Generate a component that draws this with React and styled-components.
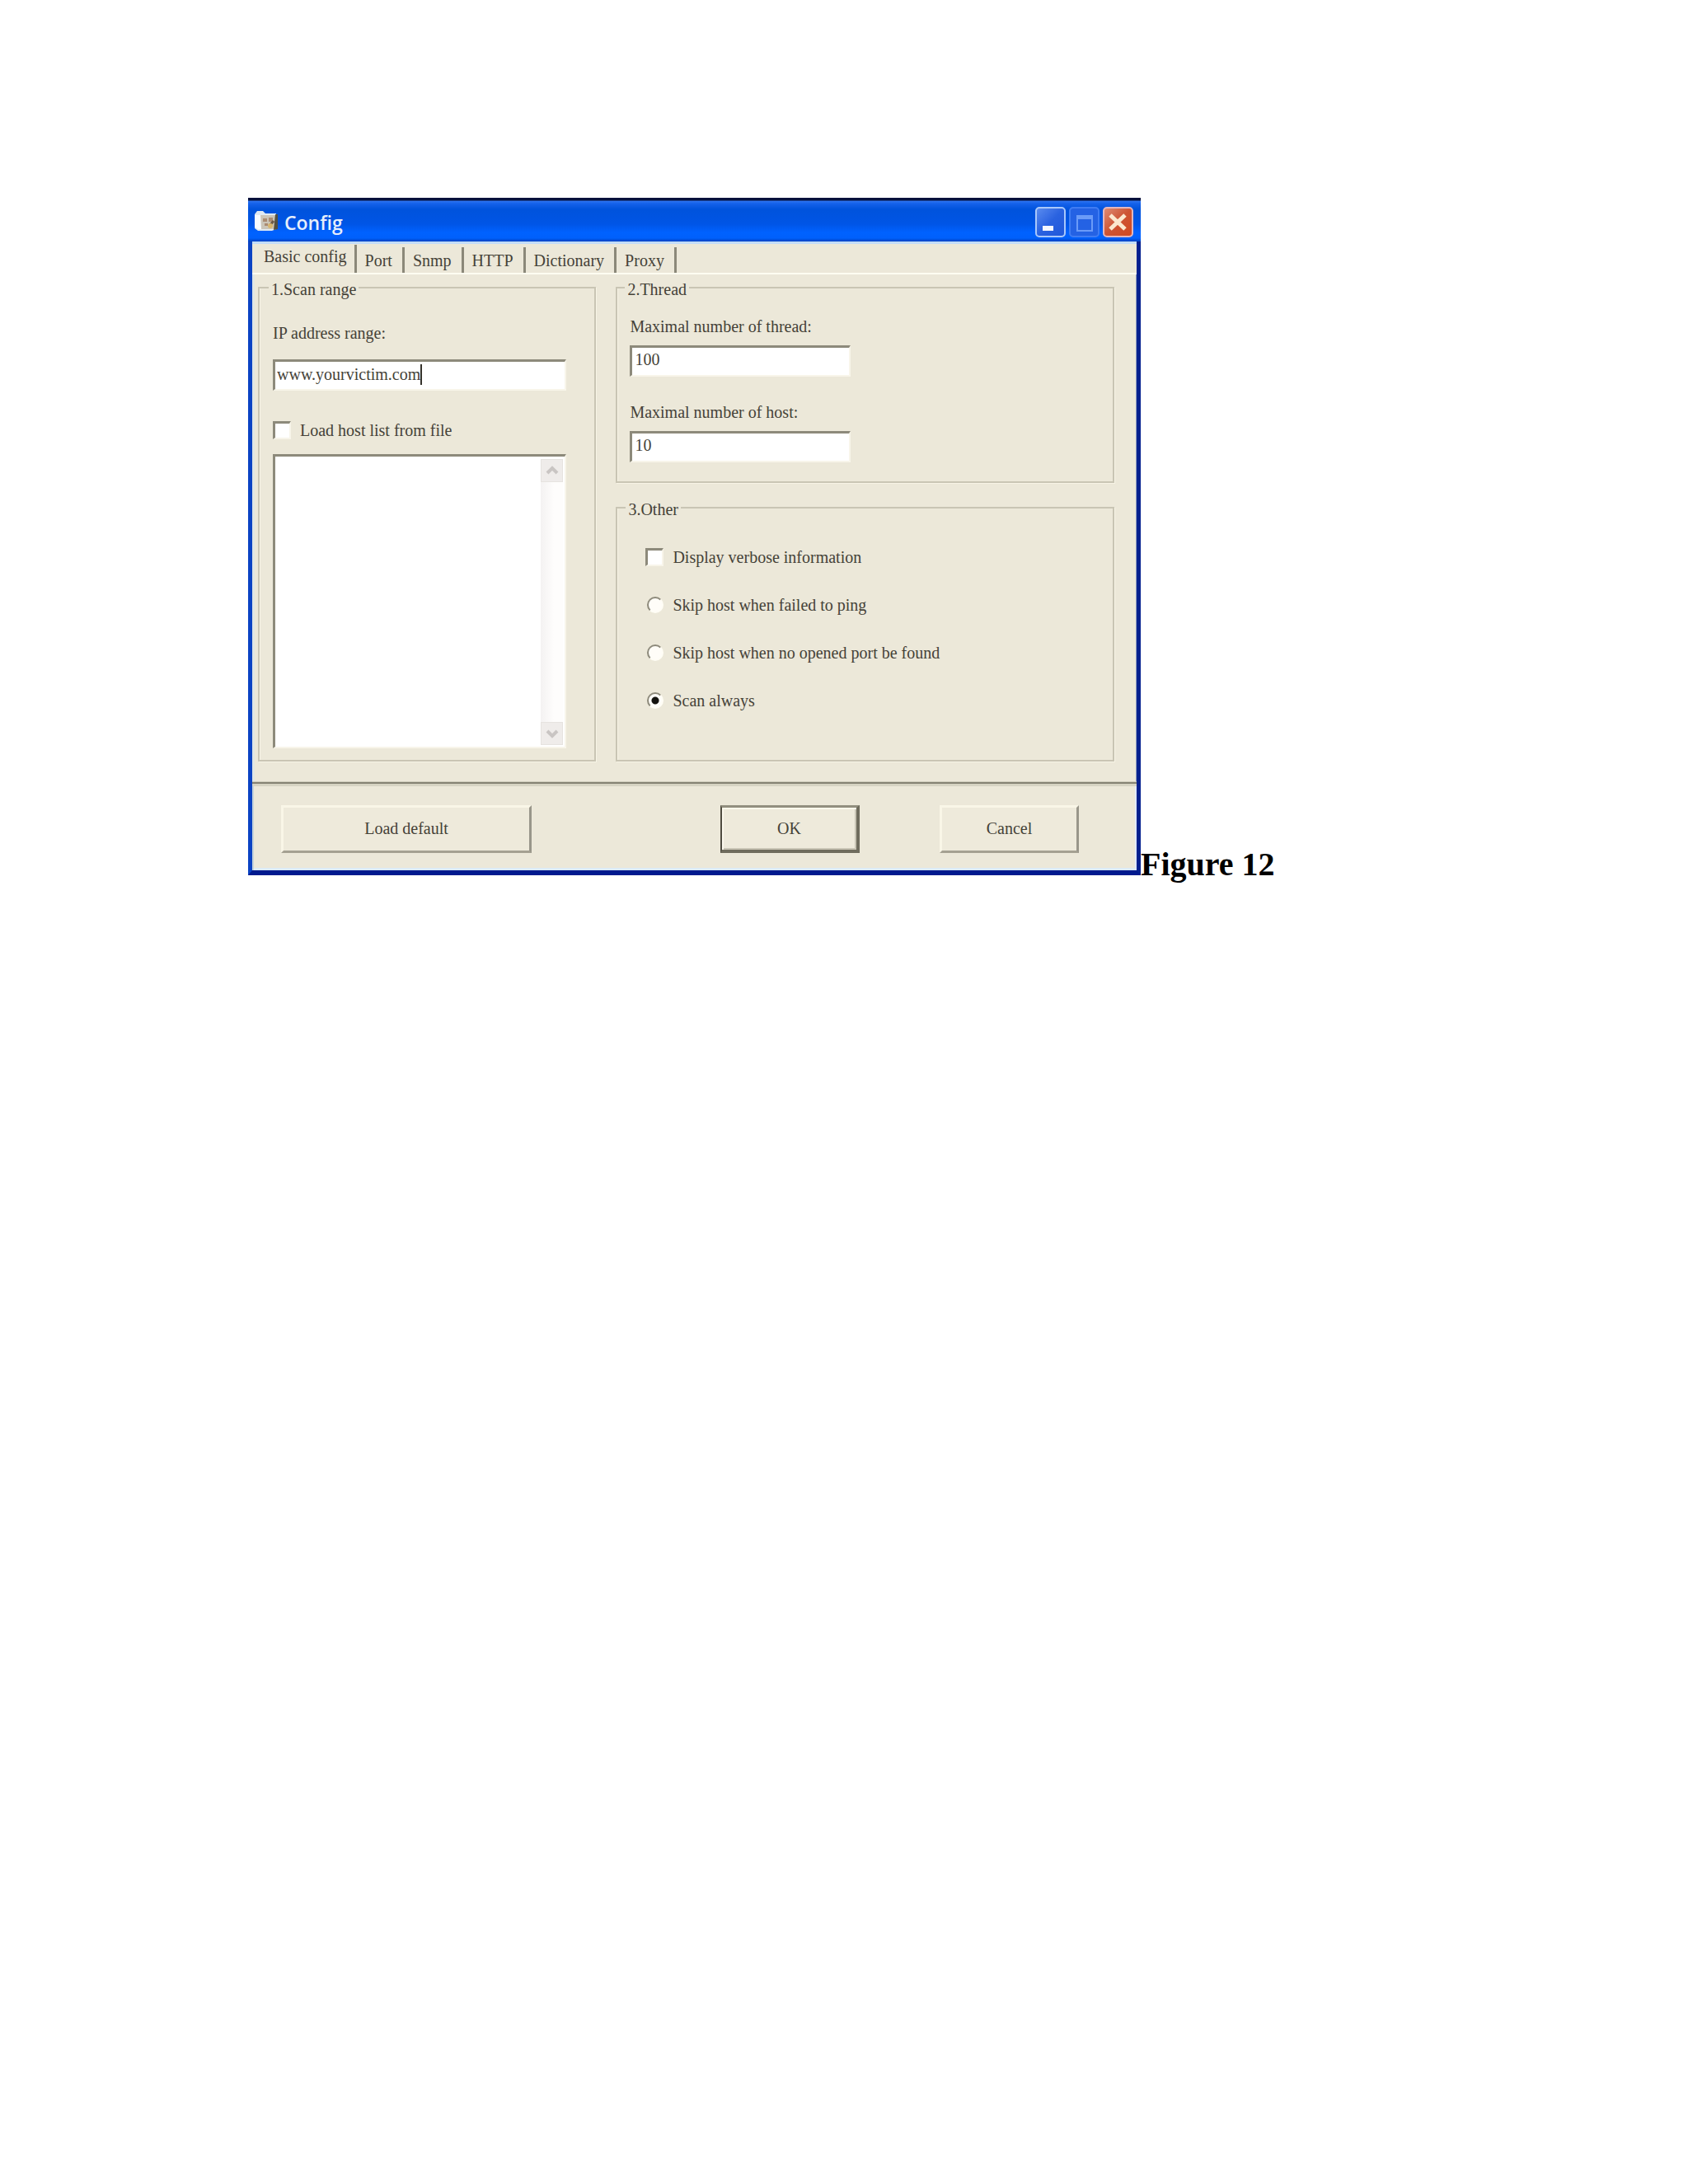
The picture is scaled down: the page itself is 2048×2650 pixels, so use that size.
import React, { useState } from "react";
import styled, { createGlobalStyle, css } from "styled-components";

const ink = "#454238";
const face = "#ece8d9";
const serif = '"Liberation Serif", "Times New Roman", serif';

const GlobalStyle = createGlobalStyle`
  *, *::before, *::after { box-sizing: border-box; }
  body {
    margin: 0;
    background: #fff;
    font-family: ${serif};
  }
  button, input, textarea { font: inherit; color: inherit; margin: 0; }
`;

const Page = styled.main`
  padding: 240px 40px 40px 301px;
`;

const Figure = styled.figure`
  display: flex;
  align-items: flex-end;
  margin: 0;
`;

const Caption = styled.figcaption`
  flex: none;
  font-size: 40px;
  font-weight: 700;
  line-height: 27px;
  color: #000;
`;

const Dialog = styled.section`
  flex: 0 1 1083px;
  border: solid;
  border-width: 0 5px 6px;
  border-color: #001a8e #04208f #001a8e #0b43c4;
  background: ${face};
  color: ${ink};
  font-size: 20px;
  line-height: 24px;
`;

const TitleBar = styled.header`
  display: flex;
  align-items: center;
  gap: 7px;
  height: 53px;
  margin: 0 -5px;
  padding: 5px 9px 0 7px;
  background: linear-gradient(
    #05103c 0, #05103c 3px, #2c74f2 4px, #1561ea 7px,
    #0053dc 14px, #0055e6 32px, #0062ff 42px, #0060fb 49px, #0042c0 53px
  );
`;

const Title = styled.h1`
  flex: 1;
  margin: 0;
  padding-top: 2px;
  font: 600 23px/28px "Open Sans", "Noto Sans", sans-serif;
  color: #e6effc;
`;

const WindowButtons = styled.div`
  display: flex;
  gap: 4px;
`;

const tones = {
  plain: css`
    border-color: #a9c8fb;
    background: linear-gradient(135deg, #5a8bef, #2a62e0 50%, #2058da);
  `,
  dim: css`
    border-color: #3f7cf3;
    background: #2462e4;
  `,
  close: css`
    border-color: #e3b6bd;
    background: linear-gradient(135deg, #dd8a72, #cd5433 50%, #d2491f);
  `,
};

const WindowButton = styled.button`
  display: grid;
  place-items: center;
  width: 37px;
  height: 37px;
  padding: 0;
  border: 2px solid;
  border-radius: 5px;
  ${({ $tone }) => tones[$tone]}
`;

const TabStrip = styled.div`
  display: flex;
  align-items: flex-end;
  height: 40px;
  padding-left: 4px;
  border-top: 3px solid #c3dcf8;
  border-bottom: 2px solid #fffdf2;
`;

const Tab = styled.button`
  height: ${({ $active }) => ($active ? 34 : 31)}px;
  padding: ${({ $active }) => ($active ? "0 9px 6px 10px" : "0 12px 0 10px")};
  border: 0;
  border-right: 3px solid #8b8879;
  background: none;
  line-height: 24px;
  white-space: nowrap;
`;

const TabPage = styled.div`
  display: grid;
  grid-template-columns: 410fr 604fr;
  gap: 24px;
  padding: 2px 26px 25px 4px;
  border-left: 3px solid #e0e6e4;
  border-right: 1px solid #8f9cc0;
`;

const Column = styled.div`
  display: flex;
  flex-direction: column;
  gap: 16px;
  min-width: 0;
`;

const Group = styled.fieldset`
  flex: ${({ $grow }) => ($grow ? "1 0 auto" : "none")};
  min-width: 0;
  margin: 0;
  padding: ${({ $pad }) => $pad};
  border: 2px solid #c9c5b4;
  box-shadow: inset 1px 0 #f7f4e6, 1px 1px #f7f4e6;
`;

const Legend = styled.legend`
  margin-left: ${({ $inset }) => $inset}px;
  padding: 4px 3px 0;
`;

const Label = styled.label`
  display: block;
`;

const sunken = css`
  border: solid;
  border-width: 3px 2px 2px 3px;
  border-color: #8d8a7b #f8f5ea #f8f5ea #8d8a7b;
  background: #fff;
`;

const TextBox = styled.input`
  display: block;
  width: 268px;
  max-width: 100%;
  height: 38px;
  margin: 11px 0 31px;
  padding: 0 3px 4px;
  border-radius: 0;
  outline: 0;
  ${sunken}
  &:last-child { margin-bottom: 0; }
`;

const AddressBox = styled.label`
  display: flex;
  align-items: center;
  height: 38px;
  margin: 20px 0 36px;
  padding: 0 2px 3px;
  cursor: text;
  ${sunken}
`;

const AddressInput = styled.input`
  field-sizing: content;
  max-width: 100%;
  padding: 0;
  border: 0;
  outline: 0;
  background: none;
`;

const Caret = styled.span`
  width: 2px;
  height: 25px;
  background: #35332c;
`;

const Option = styled.label`
  display: flex;
  align-items: center;
  gap: 11px;
`;

const Options = styled.div`
  display: flex;
  flex-direction: column;
  gap: 34px;
`;

const CheckBox = styled.input.attrs({ type: "checkbox" })`
  appearance: none;
  flex: none;
  width: 22px;
  height: 22px;
  ${sunken}
  &:checked { background: #35332c; }
`;

const Radio = styled.input.attrs({ type: "radio" })`
  appearance: none;
  flex: none;
  width: 20px;
  height: 20px;
  margin: 0 0 0 2px;
  border: 2px solid;
  border-color: #8d8a7b #fffdf5 #fffdf5 #8d8a7b;
  border-radius: 50%;
  background: #fffdf8;
  &:checked {
    background: radial-gradient(circle, #14130f 0, #14130f 4px, #fffdf8 5px);
  }
`;

const ListFrame = styled.div`
  display: flex;
  height: 357px;
  margin-top: 17px;
  padding: 3px 2px 2px 0;
  ${sunken}
`;

const HostList = styled.textarea`
  flex: 1;
  min-width: 0;
  padding: 2px 4px;
  border: 0;
  outline: 0;
  resize: none;
  background: none;
`;

const ScrollBar = styled.div`
  display: flex;
  flex-direction: column;
  justify-content: space-between;
  width: 27px;
  background: linear-gradient(90deg, #f4f2f2, #fefdfc 60%);
`;

const ScrollButton = styled.button`
  display: grid;
  place-items: center;
  height: 28px;
  padding: 0;
  border: 1px solid #e6e3e0;
  background: #efecea;
`;

const Footer = styled.footer`
  display: flex;
  gap: 97px;
  padding: 26px 70px 21px 35px;
  border-top: 2px solid #858273;
  box-shadow: inset 0 3px #d6d3c3, inset 2px 0 #c6d4da, inset -2px 0 #dfe8fa,
    inset 0 -3px #dcebf6, 0 -1px #cfccbc;
`;

const PushButton = styled.button`
  width: ${({ $wide }) => ($wide ? 304 : 169)}px;
  height: 58px;
  margin-right: ${({ $wide }) => ($wide ? "auto" : "0")};
  padding: 0 0 2px;
  border: solid;
  background: #eeeadb;
  ${({ $default }) =>
    $default
      ? css`
          border-width: 3px 4px 4px 2px;
          border-color: #928f7f #6f6c5d #6f6c5d #4f4c40;
          box-shadow: inset 2px 2px #fbf8ec, inset -2px -2px #c9c5b5;
        `
      : css`
          border-width: 3px;
          border-color: #f9f6e7 #99968a #a5a192 #f9f6e7;
        `}
`;

const FolderIcon = () => (
  <svg width="30" height="26" viewBox="0 0 30 26" aria-hidden="true">
    <path d="M1 4 4 0h7l3 3h13v19l-5 2H5l-4-3z" fill="#dfe9f2" />
    <path d="M1 5h10v17H5l-4-3z" fill="#f7fbff" />
    <path d="M8 5h19v17H9z" fill="#cbc5b8" />
    <path d="M26 4h3v18l-5 1z" fill="#54503f" />
    <path d="M11 9h5v4h-5zM18 8h5v5h-5zM13 15h4v3h-4z" fill="#aa8b72" />
    <path d="m19 18 5-6" stroke="#6b5a46" strokeWidth="3" />
    <circle cx="20" cy="18" r="3" fill="#d8b56d" />
  </svg>
);

const MinimizeIcon = () => (
  <svg width="33" height="33" viewBox="0 0 33 33" aria-hidden="true">
    <path d="M7 21h13v6H7z" fill="#f3f7ff" />
  </svg>
);

const MaximizeIcon = () => (
  <svg width="33" height="33" viewBox="0 0 33 33" aria-hidden="true">
    <path d="M8 9h18v18H8z" fill="none" stroke="#6a9bf8" strokeWidth="2" />
    <path d="M7 8h20v5H7z" fill="#6a9bf8" />
  </svg>
);

const CloseIcon = () => (
  <svg width="33" height="33" viewBox="0 0 33 33" aria-hidden="true">
    <path d="m7 8 18 17M25 8 7 25" stroke="#fbe9cf" strokeWidth="5" />
  </svg>
);

const Arrow = ({ down }) => (
  <svg width="16" height="12" viewBox="0 0 16 12" aria-hidden="true">
    <path
      d={down ? "m2 3 6 6 6-6" : "m2 9 6-6 6 6"}
      fill="none"
      stroke="#c9c5c3"
      strokeWidth="4"
    />
  </svg>
);

const tabs = ["Basic config", "Port", "Snmp", "HTTP", "Dictionary", "Proxy"];

const scanModes = [
  "Skip host when failed to ping",
  "Skip host when no opened port be found",
  "Scan always",
];

export default function App() {
  const [mode, setMode] = useState(scanModes[2]);

  return (
    <>
      <GlobalStyle />
      <Page>
        <Figure>
          <Dialog role="dialog" aria-labelledby="dialog-title">
            <TitleBar>
              <FolderIcon />
              <Title id="dialog-title">Config</Title>
              <WindowButtons>
                <WindowButton type="button" $tone="plain" aria-label="Minimize">
                  <MinimizeIcon />
                </WindowButton>
                <WindowButton type="button" $tone="dim" aria-label="Maximize">
                  <MaximizeIcon />
                </WindowButton>
                <WindowButton type="button" $tone="close" aria-label="Close">
                  <CloseIcon />
                </WindowButton>
              </WindowButtons>
            </TitleBar>

            <TabStrip role="tablist">
              {tabs.map((name, i) => (
                <Tab key={name} type="button" role="tab" aria-selected={i === 0} $active={i === 0}>
                  {name}
                </Tab>
              ))}
            </TabStrip>

            <TabPage role="tabpanel">
              <Group $pad="29px 34px 14px 16px">
                <Legend $inset={-5}>1.Scan range</Legend>
                <Label htmlFor="address">IP address range:</Label>
                <AddressBox>
                  <AddressInput id="address" type="text" defaultValue="www.yourvictim.com" />
                  <Caret />
                </AddressBox>
                <Option>
                  <CheckBox />
                  Load host list from file
                </Option>
                <ListFrame>
                  <HostList aria-label="Host list" />
                  <ScrollBar>
                    <ScrollButton type="button" aria-label="Scroll up">
                      <Arrow />
                    </ScrollButton>
                    <ScrollButton type="button" aria-label="Scroll down">
                      <Arrow down />
                    </ScrollButton>
                  </ScrollBar>
                </ListFrame>
              </Group>

              <Column>
                <Group $pad="21px 15px 23px 15px">
                  <Legend $inset={-6}>2.Thread</Legend>
                  <Label htmlFor="threads">Maximal number of thread:</Label>
                  <TextBox id="threads" type="text" defaultValue="100" />
                  <Label htmlFor="hosts">Maximal number of host:</Label>
                  <TextBox id="hosts" type="text" defaultValue="10" />
                </Group>
                <Group $grow $pad="34px 15px 16px 34px">
                  <Legend $inset={-24}>3.Other</Legend>
                  <Options>
                    <Option>
                      <CheckBox />
                      Display verbose information
                    </Option>
                    {scanModes.map((name) => (
                      <Option key={name}>
                        <Radio
                          name="scan-mode"
                          value={name}
                          checked={mode === name}
                          onChange={() => setMode(name)}
                        />
                        {name}
                      </Option>
                    ))}
                  </Options>
                </Group>
              </Column>
            </TabPage>

            <Footer>
              <PushButton type="button" $wide>
                Load default
              </PushButton>
              <PushButton type="button" $default>
                OK
              </PushButton>
              <PushButton type="button">Cancel</PushButton>
            </Footer>
          </Dialog>
          <Caption>Figure 12</Caption>
        </Figure>
      </Page>
    </>
  );
}
